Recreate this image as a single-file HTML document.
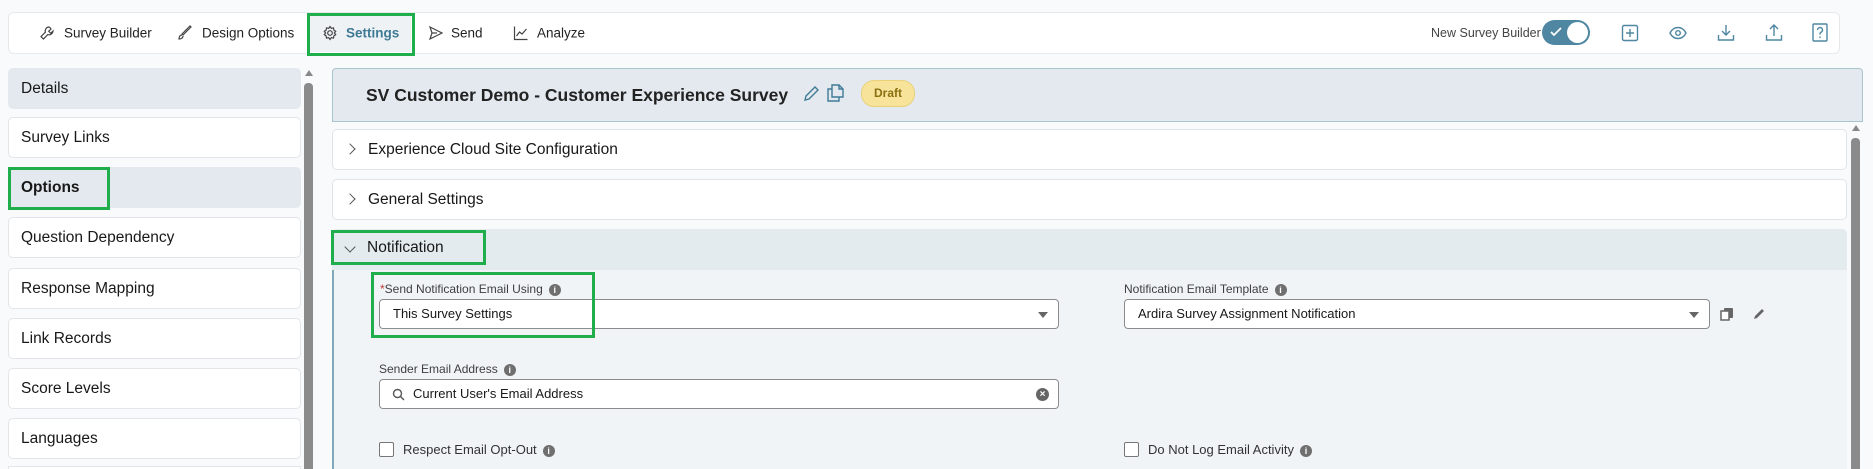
<!DOCTYPE html>
<html style="width:1873px;height:469px;overflow:hidden"><head><meta charset="utf-8"><style>
*{box-sizing:border-box;margin:0;padding:0}
body{width:1873px;height:469px;overflow:hidden;background:#f9fafb;font-family:"Liberation Sans",sans-serif;color:#181818;position:relative}
.a{position:absolute}
.tb{left:8px;top:12px;width:1832px;height:42px;background:#fff;border:1px solid #e6e9ec;border-radius:6px}
.ti{font-size:13.5px;color:#222;top:33px;transform:translateY(-50%)}
.side{left:8px;width:293px;height:41px;border:1px solid #e3e5e8;border-radius:5px;background:#fff;font-size:15.5px;padding-left:12px;line-height:39px}
.sel{background:#e3e9ee;border-color:#e3e9ee}
.row{left:332px;width:1515px;height:41px;background:#fff;border:1px solid #e1e4e7;border-radius:5px;font-size:15.5px;line-height:39px;padding-left:35px}
.chev{position:absolute;left:13px;top:15px;width:8px;height:8px;border-right:1.5px solid #555;border-bottom:1.5px solid #555;transform:rotate(-45deg)}
.gb{border:3px solid #1fae4b}
.lbl{font-size:12px;color:#3e3e3e}
.inp{background:#fff;border:1px solid #8c8c8c;border-radius:4px;font-size:13px;line-height:28px;padding-left:13px}
.info{display:inline-block;width:12px;height:12px;border-radius:50%;background:#6f6f6f;color:#fff;font-size:9px;line-height:12px;text-align:center;font-weight:bold;vertical-align:middle;margin-left:6px}
.tri{position:absolute;right:10px;top:12px;border-left:5px solid transparent;border-right:5px solid transparent;border-top:6px solid #666}
.cb{width:15px;height:15px;border:1px solid #777;border-radius:2px;background:#fff}
</style></head><body>
<div class="a tb"></div>
<svg class="a" style="left:39px;top:25px" width="16" height="16" viewBox="0 0 16 16" fill="none" stroke="#444" stroke-width="1.2"><path d="M10 2a4 4 0 0 0-3.6 5.2L2 11.6 4.4 14l4.4-4.4A4 4 0 0 0 14 6l-2.3 2.3-2-2L12 4A4 4 0 0 0 10 2z"/></svg>
<div class="a ti" style="left:64px">Survey Builder</div>
<svg class="a" style="left:177px;top:25px" width="16" height="16" viewBox="0 0 16 16" fill="none" stroke="#444" stroke-width="1.2"><path d="M14 2 6 10l-1-1 8-8zM5 10c-2 0-3 1.5-3 4 2 0 4-1 4-3"/></svg>
<div class="a ti" style="left:202px">Design Options</div>
<div class="a" style="left:310px;top:16px;width:101px;height:36px;background:#eef2f5"></div>
<div class="a gb" style="left:307px;top:13px;width:108px;height:43px"></div>
<svg class="a" style="left:322px;top:25px" width="16" height="16" viewBox="0 0 16 16" fill="none" stroke="#444" stroke-width="1.2"><circle cx="8" cy="8" r="2.3"/><path d="M8 1.5l1.3 1.8 2.2-.4.4 2.2 1.8 1.3-1.3 1.6 1.3 1.6-1.8 1.3-.4 2.2-2.2-.4L8 14.5l-1.3-1.8-2.2.4-.4-2.2L2.3 9.6 3.6 8 2.3 6.4l1.8-1.3.4-2.2 2.2.4z"/></svg>
<div class="a ti" style="left:346px;color:#3f7a95;font-weight:bold">Settings</div>
<svg class="a" style="left:428px;top:25px" width="16" height="16" viewBox="0 0 16 16" fill="none" stroke="#444" stroke-width="1.2"><path d="M2 2l12 6-12 6 2-6z M4 8h5"/></svg>
<div class="a ti" style="left:451px">Send</div>
<svg class="a" style="left:513px;top:25px" width="16" height="16" viewBox="0 0 16 16" fill="none" stroke="#444" stroke-width="1.2"><path d="M1.5 1.5v13h13M3.5 11l3-4 2.5 2 4.5-5"/></svg>
<div class="a ti" style="left:537px">Analyze</div>
<div class="a ti" style="left:1431px;font-size:12.5px;color:#444">New Survey Builder</div>
<div class="a" style="left:1542px;top:20px;width:48px;height:25px;border-radius:13px;background:#4f87a2"></div>
<div class="a" style="left:1567px;top:22px;width:21px;height:21px;border-radius:50%;background:#fff"></div>
<svg class="a" style="left:1549px;top:26px" width="14" height="12"><path d="M2 6l3 3 7-7" stroke="#fff" stroke-width="1.8" fill="none"/></svg>
<svg class="a" style="left:1621px;top:24px" width="18" height="18" viewBox="0 0 18 18" fill="none" stroke="#4f87a2" stroke-width="1.4"><rect x="1.5" y="1.5" width="15" height="15" rx="1.5"/><path d="M9 5v8M5 9h8"/></svg>
<svg class="a" style="left:1669px;top:25px" width="18" height="16" viewBox="0 0 18 16" fill="none" stroke="#4f87a2" stroke-width="1.4"><path d="M1 8c2-4 5-5.5 8-5.5s6 1.5 8 5.5c-2 4-5 5.5-8 5.5S3 12 1 8z"/><circle cx="9" cy="8" r="2.3"/></svg>
<svg class="a" style="left:1717px;top:23px" width="18" height="19" viewBox="0 0 18 19" fill="none" stroke="#4f87a2" stroke-width="1.4"><path d="M9 2v10M5 8l4 4 4-4M1.5 12v5h15v-5"/></svg>
<svg class="a" style="left:1765px;top:23px" width="18" height="19" viewBox="0 0 18 19" fill="none" stroke="#4f87a2" stroke-width="1.4"><path d="M9 13V2M5 6l4-4 4 4M1.5 12v5h15v-5"/></svg>
<svg class="a" style="left:1812px;top:23px" width="16" height="19" viewBox="0 0 16 19" fill="none" stroke="#4f87a2" stroke-width="1.4"><rect x="1" y="1" width="14" height="17" rx="1"/><path d="M5.5 7a2.5 2.5 0 1 1 3.5 2.3c-1 .5-1 1-1 2.2M8 13.5v1.5"/></svg>

<div class="a side sel" style="top:68px">Details</div>
<div class="a side" style="top:117px">Survey Links</div>
<div class="a side sel" style="top:167px;font-weight:bold">Options</div>
<div class="a gb" style="left:8px;top:167px;width:102px;height:43px"></div>
<div class="a side" style="top:217px">Question Dependency</div>
<div class="a side" style="top:268px">Response Mapping</div>
<div class="a side" style="top:318px">Link Records</div>
<div class="a side" style="top:368px">Score Levels</div>
<div class="a side" style="top:418px">Languages</div>
<div class="a" style="left:8px;top:466px;width:293px;height:3px;border:1px solid #e3e5e8;border-bottom:none;background:#fff"></div>
<div class="a" style="left:305px;top:70px;border-left:4px solid transparent;border-right:4px solid transparent;border-bottom:6px solid #888"></div>
<div class="a" style="left:304px;top:83px;width:9px;height:386px;border-radius:4px 4px 0 0;background:#8b8b8b"></div>

<div class="a" style="left:332px;top:68px;width:1531px;height:54px;background:#e3e9ee;border:1px solid #a9c4cd;border-radius:4px 4px 0 0"></div>
<div class="a" style="left:366px;top:85px;font-size:17.5px;font-weight:bold;color:#222">SV Customer Demo - Customer Experience Survey</div>
<svg class="a" style="left:802px;top:85px" width="18" height="18" viewBox="0 0 18 18" fill="none" stroke="#3f7a95" stroke-width="1.4"><path d="M3 15l1-4 9-9 3 3-9 9z"/></svg>
<svg class="a" style="left:826px;top:83px" width="19" height="20" viewBox="0 0 19 20" fill="none" stroke="#3f7a95" stroke-width="1.4"><path d="M6 2h7l4 4v8H6z M13 2v4h4 M6 6H2v12h11v-4"/></svg>
<div class="a" style="left:861px;top:80px;width:54px;height:27px;border-radius:13px;background:#f7e39a;border:1px solid #ead27a;color:#8a7010;font-size:12px;font-weight:bold;text-align:center;line-height:25px">Draft</div>

<div class="a row" style="top:129px"><span class="chev"></span>Experience Cloud Site Configuration</div>
<div class="a row" style="top:179px"><span class="chev"></span>General Settings</div>
<div class="a" style="left:1852px;top:125px;border-left:4px solid transparent;border-right:4px solid transparent;border-bottom:6px solid #888"></div>
<div class="a" style="left:1851px;top:138px;width:9px;height:331px;border-radius:4px 4px 0 0;background:#8b8b8b"></div>
<div class="a" style="left:332px;top:229px;width:1515px;height:41px;background:#e3ebee;border-radius:5px 5px 0 0"></div>
<div class="a" style="left:332px;top:270px;width:1515px;height:199px;background:#f0f4f7;border-left:2px solid #7fa8b8"></div>
<span class="a chev" style="left:346px;top:243px;transform:rotate(45deg)"></span>
<div class="a" style="left:367px;top:239px;font-size:15.5px">Notification</div>
<div class="a gb" style="left:331px;top:230px;width:155px;height:35px"></div>

<div class="a lbl" style="left:380px;top:282px"><span style="color:#c23934">*</span>Send Notification Email Using<span class="info">i</span></div>
<div class="a inp" style="left:379px;top:299px;width:680px;height:30px">This Survey Settings<span class="tri"></span></div>
<div class="a gb" style="left:371px;top:272px;width:224px;height:66px"></div>
<div class="a lbl" style="left:379px;top:362px">Sender Email Address<span class="info">i</span></div>
<div class="a inp" style="left:379px;top:379px;width:680px;height:30px;padding-left:33px">Current User's Email Address
<svg style="position:absolute;left:12px;top:8px" width="13" height="13" viewBox="0 0 13 13" fill="none" stroke="#555" stroke-width="1.4"><circle cx="5.5" cy="5.5" r="4"/><path d="M8.5 8.5l3.5 3.5"/></svg>
<span style="position:absolute;right:9px;top:8px;width:13px;height:13px;border-radius:50%;background:#666;color:#fff;font-size:10px;line-height:13px;text-align:center;font-weight:bold">×</span></div>
<div class="a cb" style="left:379px;top:442px"></div>
<div class="a" style="left:403px;top:442px;font-size:13px;color:#333">Respect Email Opt-Out<span class="info">i</span></div>

<div class="a lbl" style="left:1124px;top:282px">Notification Email Template<span class="info">i</span></div>
<div class="a inp" style="left:1124px;top:299px;width:586px;height:30px">Ardira Survey Assignment Notification<span class="tri"></span></div>
<svg class="a" style="left:1720px;top:307px" width="14" height="14" viewBox="0 0 14 14" fill="#666"><rect x="4" y="1" width="9" height="10" rx="1"/><rect x="1" y="4" width="8" height="9" fill="#fff" stroke="#666" stroke-width="1.5"/></svg>
<svg class="a" style="left:1752px;top:307px" width="14" height="14" viewBox="0 0 14 14"><path d="M2 12l1-3 7-7 2 2-7 7z" fill="#666"/></svg>
<div class="a cb" style="left:1124px;top:442px"></div>
<div class="a" style="left:1148px;top:442px;font-size:13px;color:#333">Do Not Log Email Activity<span class="info">i</span></div>
</body></html>
